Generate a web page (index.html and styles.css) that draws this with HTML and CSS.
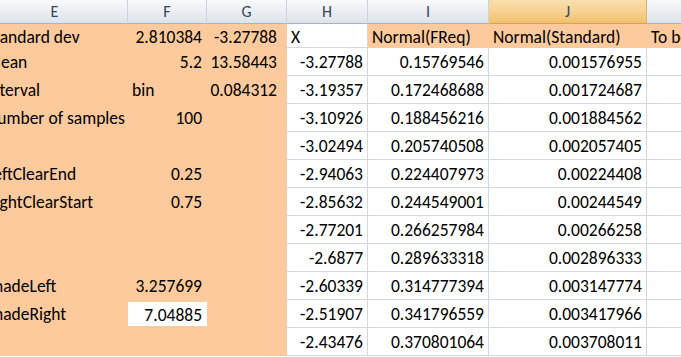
FILE: index.html
```html
<!DOCTYPE html>
<html lang="en">
<head>
<meta charset="utf-8">
<title>Normal distribution worksheet</title>
<link rel="stylesheet" href="styles.css">
</head>
<body>
<div class="sheet">
  <!-- column headers -->
  <div class="hd">E</div>
  <div class="hd">F</div>
  <div class="hd">G</div>
  <div class="hd">H</div>
  <div class="hd">I</div>
  <div class="hd sel">J</div>
  <div class="hd"></div>

  <!-- row: titles -->
  <div class="c top fill">Standard dev</div>
  <div class="c top fill num">2.810384</div>
  <div class="c top fill num g">-3.27788</div>
  <div class="c top">X</div>
  <div class="c top fill">Normal(FReq)</div>
  <div class="c top fill">Normal(Standard)</div>
  <div class="c top fill">To be</div>

  <div class="c fill">Mean</div>
  <div class="c fill num">5.2</div>
  <div class="c fill num g">13.58443</div>
  <div class="c num">-3.27788</div>
  <div class="c num">0.15769546</div>
  <div class="c num">0.001576955</div>
  <div class="c"></div>

  <div class="c fill">Interval</div>
  <div class="c fill">bin</div>
  <div class="c fill num g">0.084312</div>
  <div class="c num">-3.19357</div>
  <div class="c num">0.172468688</div>
  <div class="c num">0.001724687</div>
  <div class="c"></div>

  <div class="c fill">Number of samples</div>
  <div class="c fill num">100</div>
  <div class="c fill"></div>
  <div class="c num">-3.10926</div>
  <div class="c num">0.188456216</div>
  <div class="c num">0.001884562</div>
  <div class="c"></div>

  <div class="c fill"></div>
  <div class="c fill"></div>
  <div class="c fill"></div>
  <div class="c num">-3.02494</div>
  <div class="c num">0.205740508</div>
  <div class="c num">0.002057405</div>
  <div class="c"></div>

  <div class="c fill">LeftClearEnd</div>
  <div class="c fill num">0.25</div>
  <div class="c fill"></div>
  <div class="c num">-2.94063</div>
  <div class="c num">0.224407973</div>
  <div class="c num">0.00224408</div>
  <div class="c"></div>

  <div class="c fill">RightClearStart</div>
  <div class="c fill num">0.75</div>
  <div class="c fill"></div>
  <div class="c num">-2.85632</div>
  <div class="c num">0.244549001</div>
  <div class="c num">0.00244549</div>
  <div class="c"></div>

  <div class="c fill"></div>
  <div class="c fill"></div>
  <div class="c fill"></div>
  <div class="c num">-2.77201</div>
  <div class="c num">0.266257984</div>
  <div class="c num">0.00266258</div>
  <div class="c"></div>

  <div class="c fill"></div>
  <div class="c fill"></div>
  <div class="c fill"></div>
  <div class="c num">-2.6877</div>
  <div class="c num">0.289633318</div>
  <div class="c num">0.002896333</div>
  <div class="c"></div>

  <div class="c fill">ShadeLeft</div>
  <div class="c fill num">3.257699</div>
  <div class="c fill"></div>
  <div class="c num">-2.60339</div>
  <div class="c num">0.314777394</div>
  <div class="c num">0.003147774</div>
  <div class="c"></div>

  <div class="c fill">ShadeRight</div>
  <div class="c fill num input">7.04885</div>
  <div class="c fill"></div>
  <div class="c num">-2.51907</div>
  <div class="c num">0.341796559</div>
  <div class="c num">0.003417966</div>
  <div class="c"></div>

  <div class="c fill"></div>
  <div class="c fill"></div>
  <div class="c fill"></div>
  <div class="c num">-2.43476</div>
  <div class="c num">0.370801064</div>
  <div class="c num">0.003708011</div>
  <div class="c"></div>
</div>
</body>
</html>
```
FILE: styles.css
```css
html, body {
  margin: 0;
  padding: 0;
  background: #ffffff;
  overflow: hidden;
}

/* worksheet grid: columns E..K, E scrolled partly out of view */
.sheet {
  display: grid;
  grid-template-columns: 146px 79px 80px 81px 121px 158px 80px;
  grid-template-rows: 24px 24px repeat(11, 28px);
  margin-left: -18px;
  width: 745px;
  font-family: Calibri, Carlito, "Open Sans", "Noto Sans", sans-serif;
  font-size: 17.5px;
  color: #000000;
}

/* column header strip */
.hd {
  box-sizing: border-box;
  display: flex;
  align-items: center;
  justify-content: center;
  padding-top: 1px;
  line-height: 18px;
  font-size: 16px;
  color: #34465a;
  background: linear-gradient(#f8f9fb, #e9edf2 55%, #dde3ea);
  border-right: 1px solid #c9d2dd;
  border-bottom: 1px solid #9eb6ce;
}

.hd.sel {
  background: linear-gradient(#f9dfae, #f6d191 50%, #f2c06c);
  border-right-color: #e2b36a;
  border-bottom-color: #dba153;
}

/* ordinary cell with gridlines */
.c {
  box-sizing: border-box;
  display: flex;
  align-items: flex-end;
  white-space: nowrap;
  overflow: visible;
  padding: 0 4px 4px 4px;
  line-height: 18px;
  border-right: 1px solid #d0d7e5;
  border-bottom: 1px solid #d0d7e5;
}

.c.top {
  padding-bottom: 1px;
}

.num {
  justify-content: flex-end;
}

.num.g {
  padding-right: 9px;
}

/* light orange fill hides the gridlines */
.fill {
  background: #fcca9c;
  border-color: transparent;
}

.c.input {
  background: #ffffff;
  border-top: 2px solid #fcca9c;
  border-bottom: 2px solid #fcca9c;
  padding-bottom: 2px;
}
```
